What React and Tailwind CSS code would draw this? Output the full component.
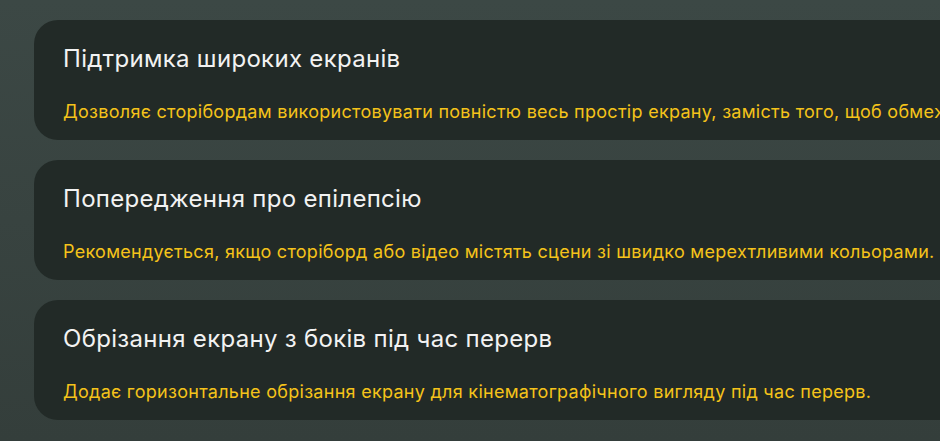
const settings = [
  {
    title: "Підтримка широких екранів",
    description:
      "Дозволяє сторібордам використовувати повністю весь простір екрану, замість того, щоб обмежуватися стандартним співвідношенням сторін.",
  },
  {
    title: "Попередження про епілепсію",
    description:
      "Рекомендується, якщо сторіборд або відео містять сцени зі швидко мерехтливими кольорами.",
  },
  {
    title: "Обрізання екрану з боків під час перерв",
    description:
      "Додає горизонтальне обрізання екрану для кінематографічного вигляду під час перерв.",
  },
];

export default function App() {
  return (
    <div
      className="h-[441px] w-[940px] overflow-hidden bg-gradient-to-b from-[#3c4845] to-[#343e3b] pl-[34px] pt-[20px]"
      style={{ fontFamily: "Inter, 'Noto Sans', sans-serif" }}
    >
      <div className="flex w-[1200px] flex-col gap-[20px]">
        {settings.map((item) => (
          <SettingCard
            key={item.title}
            title={item.title}
            description={item.description}
          />
        ))}
      </div>
    </div>
  );
}

function SettingCard({ title, description }) {
  return (
    <div className="flex h-[120px] flex-col rounded-[24px] bg-[#222a27] px-[29px] pt-[24px]">
      <h2 className="whitespace-nowrap text-[24px] leading-[30px] font-normal tracking-[0.3px] text-[#f2f2f2]">
        {title}
      </h2>
      <p className="mt-[26px] whitespace-nowrap text-[18px] leading-[24px] tracking-[0.28px] text-[#f5c31a]">
        {description}
      </p>
    </div>
  );
}
